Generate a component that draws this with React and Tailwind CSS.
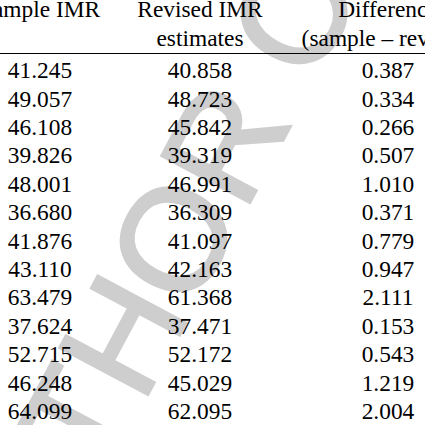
import React from "react";

const ROWS = [
  ["41.245", "40.858", "0.387"],
  ["49.057", "48.723", "0.334"],
  ["46.108", "45.842", "0.266"],
  ["39.826", "39.319", "0.507"],
  ["48.001", "46.991", "1.010"],
  ["36.680", "36.309", "0.371"],
  ["41.876", "41.097", "0.779"],
  ["43.110", "42.163", "0.947"],
  ["63.479", "61.368", "2.111"],
  ["37.624", "37.471", "0.153"],
  ["52.715", "52.172", "0.543"],
  ["46.248", "45.029", "1.219"],
  ["64.099", "62.095", "2.004"],
];

// faint diagonal watermark sitting behind the table
function Watermark() {
  return (
    <svg className="absolute inset-0 pointer-events-none" width="425" height="425" viewBox="0 0 425 425">
      <text
        x="6"
        y="661"
        transform="rotate(-62 6 661)"
        fontSize="145"
        fill="#cecece"
        stroke="#cecece"
        strokeWidth="3"
        fontFamily="'Liberation Sans', Arial, sans-serif"
      >
        AUTHOR COPY
      </text>
    </svg>
  );
}

export default function App() {
  return (
    <div className="relative w-[425px] h-[425px] overflow-hidden bg-white text-black">
      <Watermark />
      <div className="relative w-[456px] mt-[-4.8px] font-['Liberation_Serif','Times_New_Roman',serif] text-[23.4px] leading-[28.4px]">
        <div className="grid grid-cols-[80px_240px_136px] text-center whitespace-nowrap">
          <div className="flex flex-col items-center">
            <span>Sample IMR</span>
          </div>
          <div className="flex flex-col items-center">
            <span>Revised IMR</span>
            <span>estimates</span>
          </div>
          <div className="flex flex-col items-center">
            <span>Difference</span>
            <span>(sample – revised)</span>
          </div>
        </div>
        <div className="mt-[0.7px] h-[1.3px] bg-black" />
        <div className="pt-[2.2px]">
          {ROWS.map((r) => (
            <div key={r[0]} className="grid grid-cols-[80px_240px_136px] text-center">
              <span>{r[0]}</span>
              <span>{r[1]}</span>
              <span>{r[2]}</span>
            </div>
          ))}
        </div>
      </div>
    </div>
  );
}
